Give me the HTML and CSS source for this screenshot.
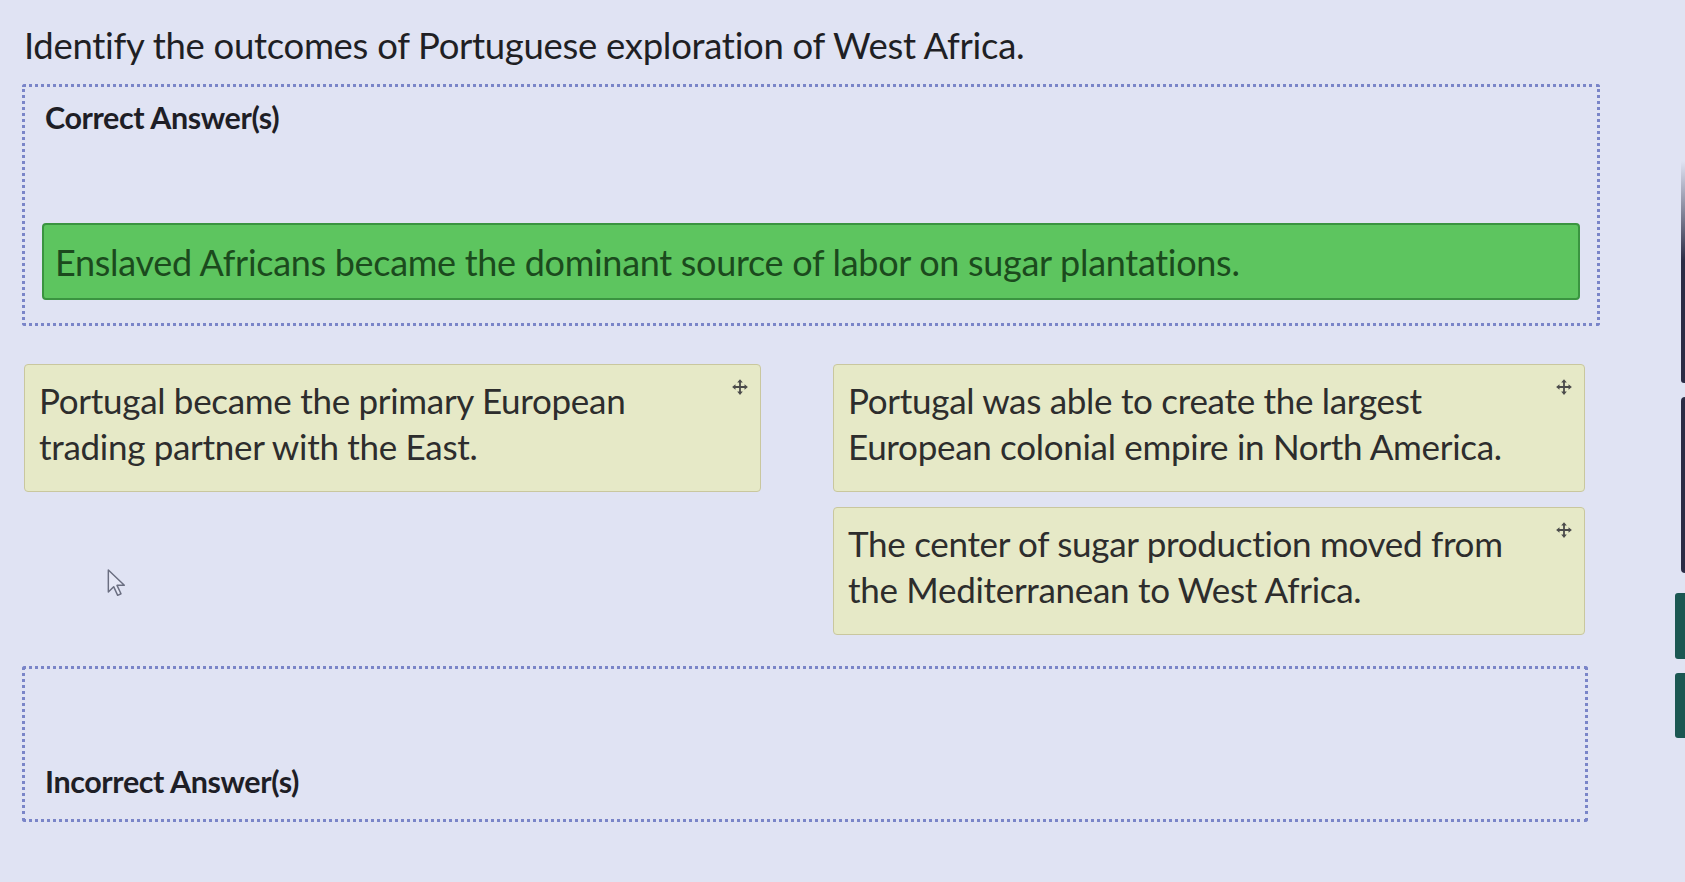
FILE: index.html
```html
<!DOCTYPE html>
<html>
<head>
<meta charset="utf-8">
<link rel="stylesheet" href="styles.css">
</head>
<body>
<div class="page">
  <main class="main">
    <h1 class="title">Identify the outcomes of Portuguese exploration of West Africa.</h1>
    <section class="zone zone-correct">
      <div class="zone-label">Correct Answer(s)</div>
      <div class="answer-correct">Enslaved Africans became the dominant source of labor on sugar plantations.</div>
    </section>
    <div class="pool">
      <div class="pool-col">
        <div class="card">
          <span class="card-text">Portugal became the primary European trading partner with the East.</span>
          <svg class="move" viewBox="0 0 16 16"><path d="M8 1 L5.5 4 H7.2 V7.2 H4 V5.5 L1 8 L4 10.5 V8.8 H7.2 V12 H5.5 L8 15 L10.5 12 H8.8 V8.8 H12 V10.5 L15 8 L12 5.5 V7.2 H8.8 V4 H10.5 Z"/></svg>
        </div>
      </div>
      <div class="pool-col">
        <div class="card">
          <span class="card-text">Portugal was able to create the largest European colonial empire in North America.</span>
          <svg class="move" viewBox="0 0 16 16"><path d="M8 1 L5.5 4 H7.2 V7.2 H4 V5.5 L1 8 L4 10.5 V8.8 H7.2 V12 H5.5 L8 15 L10.5 12 H8.8 V8.8 H12 V10.5 L15 8 L12 5.5 V7.2 H8.8 V4 H10.5 Z"/></svg>
        </div>
        <div class="card">
          <span class="card-text">The center of sugar production moved from the Mediterranean to West Africa.</span>
          <svg class="move" viewBox="0 0 16 16"><path d="M8 1 L5.5 4 H7.2 V7.2 H4 V5.5 L1 8 L4 10.5 V8.8 H7.2 V12 H5.5 L8 15 L10.5 12 H8.8 V8.8 H12 V10.5 L15 8 L12 5.5 V7.2 H8.8 V4 H10.5 Z"/></svg>
        </div>
      </div>
    </div>
    <section class="zone zone-incorrect">
      <div class="zone-label">Incorrect Answer(s)</div>
    </section>
    <svg class="cursor" viewBox="0 0 16 24"><path d="M1.5 1.5 L1.5 18 L5.5 14 L8.5 20.5 L11 19.3 L8 13 L13.5 13 Z"/></svg>
  </main>
  <aside class="edge">
    <div class="edge-line l1"></div>
    <div class="edge-line l2"></div>
    <div class="edge-block b1"></div>
    <div class="edge-block b2"></div>
  </aside>
</div>
</body>
</html>
```
FILE: styles.css
```css
* { box-sizing: border-box; }
html, body {
  margin: 0;
  padding: 0;
  height: 100%;
}
body {
  background: #e0e3f3;
  font-family: Lato, "Open Sans", "Noto Sans", sans-serif;
  color: #222;
  overflow: hidden;
}
.page {
  display: flex;
  height: 882px;
}
.main {
  position: relative;
  flex: 1;
  padding: 21px 75px 0 22px;
}
.title {
  margin: 0 0 0 2px;
  font-size: 36.5px;
  font-weight: 400;
  line-height: 48px;
  letter-spacing: -0.3px;
  color: #1f1f24;
}
.zone {
  border: 3px dotted #7a85c8;
  border-radius: 3px;
}
.zone-correct {
  margin-top: 15px;
  padding: 12px 17px 23px 17px;
  height: 242px;
  display: flex;
  flex-direction: column;
}
.zone-label {
  font-size: 30.5px;
  font-weight: 700;
  color: #1e1e26;
  letter-spacing: -0.4px;
  line-height: 36px;
  padding-left: 3px;
}
.answer-correct {
  margin-top: auto;
  background: #5dc55f;
  border: 2px solid #3a9440;
  border-radius: 4px;
  height: 77px;
  display: flex;
  align-items: center;
  padding: 0 11px;
  font-size: 36px;
  color: #1b4a1d;
  letter-spacing: -0.3px;
}
.pool {
  display: grid;
  grid-template-columns: 737px 752px;
  column-gap: 72px;
  margin-top: 38px;
  margin-left: 2px;
}
.pool-col {
  display: flex;
  flex-direction: column;
  gap: 15px;
}
.card {
  position: relative;
  background: #e6e9c7;
  border: 1.5px solid #c9c79e;
  border-radius: 4px;
  height: 128px;
  padding: 12px 40px 0 14px;
  font-size: 35px;
  line-height: 46px;
  color: #2d2d2d;
  letter-spacing: -0.3px;
}
.card-text {
  display: block;
  max-width: 680px;
}
.move {
  position: absolute;
  top: 13px;
  right: 11px;
  width: 18px;
  height: 18px;
  fill: #4b4b4b;
}
.zone-incorrect {
  margin-top: 31px;
  margin-right: 12px;
  height: 156px;
  display: flex;
  flex-direction: column;
  justify-content: flex-end;
  padding: 0 17px 20px 17px;
}
.cursor {
  position: absolute;
  left: 106px;
  top: 568px;
  width: 22px;
  height: 32px;
  fill: #e6e8f6;
  stroke: #6a6e80;
  stroke-width: 1.1;
  stroke-linejoin: round;
}
.edge {
  width: 10px;
  display: flex;
  flex-direction: column;
  align-items: flex-end;
}
.edge-line {
  width: 4px;
  background: #2b2c45;
  border-radius: 3px 0 0 3px;
}
.l1 {
  height: 222px;
  margin-top: 161px;
  background: linear-gradient(to bottom, rgba(43, 44, 69, 0) 0%, #2b2c45 45%, #2b2c45 100%);
  border-radius: 0 0 0 3px;
}
.l2 { height: 176px; margin-top: 14px; border-radius: 4px 0 0 4px; }
.edge-block {
  width: 10px;
  background: #1b5752;
  border-radius: 3px 0 0 3px;
}
.b1 { height: 66px; margin-top: 20px; }
.b2 { height: 65px; margin-top: 14px; }
```
